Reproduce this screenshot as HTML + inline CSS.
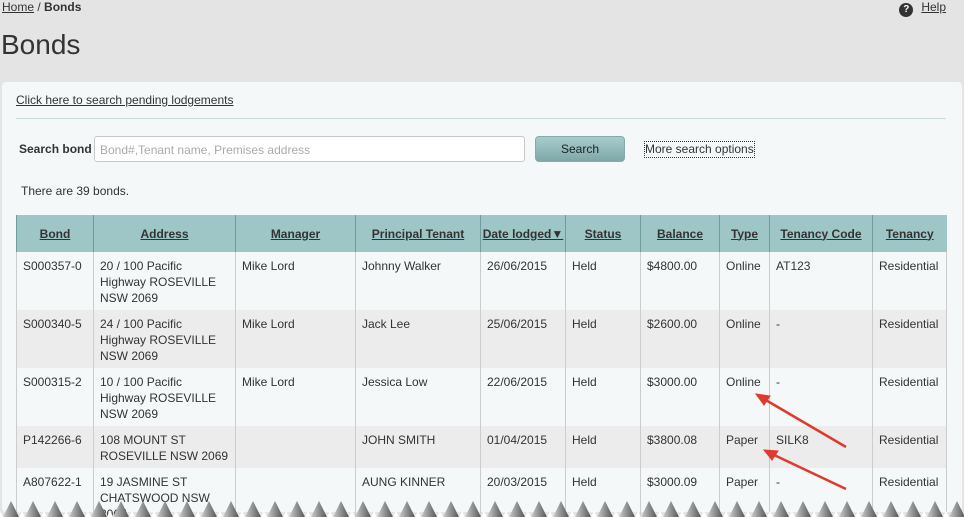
<!DOCTYPE html>
<html><head><meta charset="utf-8"><style>
*{box-sizing:border-box}
html,body{margin:0;width:964px;height:517px;overflow:hidden}
body{background:#e4e4e4;font-family:"Liberation Sans",Arial,sans-serif;color:#333;position:relative}
a{color:#333}
.crumb{position:absolute;left:2px;top:0;font-size:12px}
.help{position:absolute;right:18px;top:0;font-size:12px}
.help .q{display:inline-block;width:14px;height:14px;border-radius:50%;background:#333;color:#fff;font-size:10px;font-weight:bold;text-align:center;line-height:14px;margin-right:8px;vertical-align:-1px}
h1{position:absolute;left:1px;top:29px;margin:0;font-weight:normal;font-size:28px;color:#333}
.panel{position:absolute;left:2px;top:82px;width:960px;height:430px;background:#f4f8f8;border-radius:4px}
.pend{position:absolute;left:16px;top:93px;font-size:12px}
.hr{position:absolute;left:16px;top:118px;width:930px;border-top:1px solid #c9dcdc}
.sl{position:absolute;left:19px;top:142px;font-size:12px;font-weight:bold}
.inp{position:absolute;left:94px;top:136px;width:431px;height:26px;border:1px solid #c8c8c8;border-radius:3px;background:#fff;font-size:12px;color:#aaa;padding:6px 5px}
.btn{position:absolute;left:535px;top:136px;width:90px;height:26px;border:1px solid #8aa;border-radius:4px;background:linear-gradient(#a8cccc,#7ea8a8);font-size:12px;text-align:center;line-height:24px;color:#222}
.more{position:absolute;left:644px;top:141px;font-size:12px;border:1px dotted #333;padding:0 0 1px 0}
.cnt{position:absolute;left:21px;top:184px;font-size:12px}
table{position:absolute;left:16px;top:215px;border-collapse:collapse;font-size:12px;table-layout:fixed;width:930px}
th{background:#9ec6c6;height:37px;font-weight:bold;text-decoration:underline;border-left:1px solid #6f9d9d;padding:0;color:#333}
td{vertical-align:top;border-left:1px solid #ccc;padding:6px 4px 0 6px;line-height:16px}
tr td:last-child{border-right:1px solid #ccc}
tr.g td{background:#ececec}
</style></head><body>
<div class="crumb"><a href="#">Home</a> / <b>Bonds</b></div>
<div class="help"><span class="q">?</span><a href="#">Help</a></div>
<h1>Bonds</h1>
<div class="panel"></div>
<a class="pend" href="#">Click here to search pending lodgements</a>
<div class="hr"></div>
<div class="sl">Search bond</div>
<div class="inp">Bond#,Tenant name, Premises address</div>
<div class="btn">Search</div>
<div class="more">More search options</div>
<div class="cnt">There are 39 bonds.</div>
<table>
<colgroup><col style="width:77px"><col style="width:142px"><col style="width:120px"><col style="width:125px"><col style="width:85px"><col style="width:75px"><col style="width:79px"><col style="width:50px"><col style="width:103px"><col style="width:74px"></colgroup>
<tr><th>Bond</th><th>Address</th><th>Manager</th><th>Principal Tenant</th><th>Date lodged▼</th><th>Status</th><th>Balance</th><th>Type</th><th>Tenancy Code</th><th>Tenancy</th></tr>
<tr style="height:58px"><td>S000357-0</td><td>20 / 100 Pacific Highway ROSEVILLE NSW 2069</td><td>Mike Lord</td><td>Johnny Walker</td><td>26/06/2015</td><td>Held</td><td>$4800.00</td><td>Online</td><td>AT123</td><td>Residential</td></tr>
<tr class="g" style="height:58px"><td>S000340-5</td><td>24 / 100 Pacific Highway ROSEVILLE NSW 2069</td><td>Mike Lord</td><td>Jack Lee</td><td>25/06/2015</td><td>Held</td><td>$2600.00</td><td>Online</td><td>-</td><td>Residential</td></tr>
<tr style="height:58px"><td>S000315-2</td><td>10 / 100 Pacific Highway ROSEVILLE NSW 2069</td><td>Mike Lord</td><td>Jessica Low</td><td>22/06/2015</td><td>Held</td><td>$3000.00</td><td>Online</td><td>-</td><td>Residential</td></tr>
<tr class="g" style="height:42px"><td>P142266-6</td><td>108 MOUNT ST ROSEVILLE NSW 2069</td><td></td><td>JOHN SMITH</td><td>01/04/2015</td><td>Held</td><td>$3800.08</td><td>Paper</td><td>SILK8</td><td>Residential</td></tr>
<tr style="height:58px"><td>A807622-1</td><td>19 JASMINE ST CHATSWOOD NSW 2067</td><td></td><td>AUNG KINNER</td><td>20/03/2015</td><td>Held</td><td>$3000.09</td><td>Paper</td><td>-</td><td>Residential</td></tr>
</table>
<svg style="position:absolute;left:0;top:0" width="964" height="517">
<defs><linearGradient id="t" x1="0" x2="1"><stop offset="0" stop-color="#ccc"/><stop offset="1" stop-color="#555"/></linearGradient>
<pattern id="z" x="0" y="501" width="22" height="16" patternUnits="userSpaceOnUse"><polygon points="0,16 0,10 3,16" fill="#fff"/><polygon points="19,16 22,10 22,16" fill="#fff"/><polygon points="3,16 11,0 19,16" fill="url(#t)"/></pattern></defs>
<rect x="0" y="501" width="964" height="16" fill="url(#z)"/>
<g stroke="#e03a2e" stroke-width="2.5" fill="#e03a2e">
<line x1="846" y1="447" x2="764" y2="399"/><polygon points="756,394 770,396 764,405" stroke-width="1"/>
<line x1="846" y1="489" x2="772" y2="454"/><polygon points="764,450 778,451 772,460" stroke-width="1"/>
</g>
</svg>
</body></html>
